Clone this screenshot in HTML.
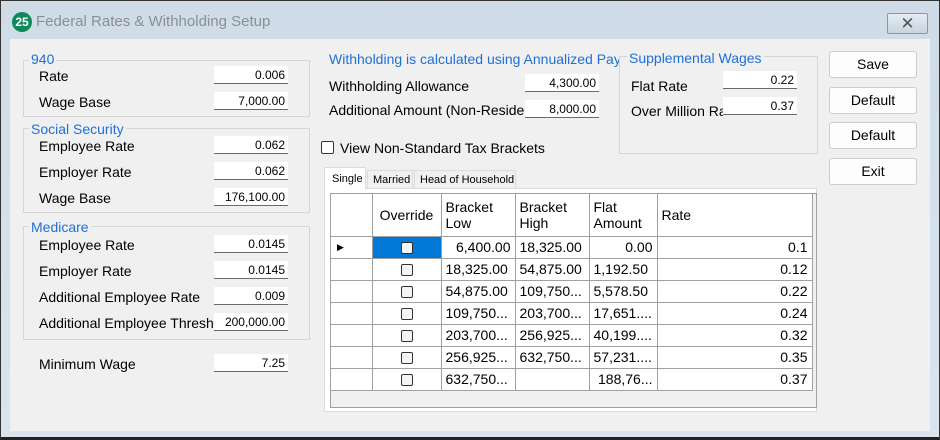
<!DOCTYPE html>
<html><head><style>
*{box-sizing:border-box;margin:0;padding:0}
body{width:940px;height:440px;overflow:hidden;background:#dbe6f1;font-family:"Liberation Sans",sans-serif;position:relative}
.a{position:absolute}
.win{left:0;top:0;width:940px;height:440px;border:1px solid #333;border-bottom:3px solid #222;background:linear-gradient(#cfdbe7,#d9e4ef)}
.body{left:10px;top:39px;width:920px;height:392px;background:#f0f0f0}
.lbl{font-size:14px;color:#000;white-space:nowrap}
.blue{color:#1e6fd9;font-size:14px;white-space:nowrap}
.in{background:#fff;border-bottom:1px solid #6a6a6a;height:18px;font-size:12px;text-align:right;padding:2px 3px 0 0;white-space:nowrap}
.grp{border:1px solid #d6d6d6}
.gt{background:#f0f0f0;padding:0 2px}
.btn{background:#fdfdfd;border:1px solid #ccc;border-radius:3px;width:88px;height:27px;font-size:14px;text-align:center;line-height:25px}
table{border-collapse:collapse;font-size:14px}
td{border:1px solid #a0a0a0;height:22px;padding:0 4px;white-space:nowrap;overflow:hidden}
.cb{display:inline-block;width:12px;height:12px;border:1px solid #333;border-radius:2px;background:#f4f4f4;vertical-align:middle}
</style></head><body>
<div class="a win"></div>
<div class="a" style="left:12px;top:12px;width:20px;height:20px;border-radius:50%;background:#0d8a5a;color:#fff;font-size:12px;font-weight:bold;text-align:center;line-height:20px">25</div>
<div class="a" style="left:36px;top:13px;font-size:15px;color:#8a8f96">Federal Rates &amp; Withholding Setup</div>
<div class="a" style="left:887px;top:13px;width:41px;height:21px;border:1px solid #8898aa;background:linear-gradient(#e4ecf4,#c8d4e0);border-radius:2px;text-align:center;font-size:17px;line-height:19px;color:#555">✕</div>
<div class="a body"></div>

<div class="a grp" style="left:23px;top:60px;width:287px;height:57px"></div>
<div class="a blue gt" style="left:29px;top:51px">940</div>
<div class="a lbl" style="left:39px;top:68px">Rate</div>
<div class="a in" style="left:214px;top:66px;width:74px">0.006</div>
<div class="a lbl" style="left:39px;top:94px">Wage Base</div>
<div class="a in" style="left:214px;top:92px;width:74px">7,000.00</div>

<div class="a grp" style="left:23px;top:128px;width:287px;height:85px"></div>
<div class="a blue gt" style="left:29px;top:121px">Social Security</div>
<div class="a lbl" style="left:39px;top:138px">Employee Rate</div>
<div class="a in" style="left:214px;top:136px;width:74px">0.062</div>
<div class="a lbl" style="left:39px;top:164px">Employer Rate</div>
<div class="a in" style="left:214px;top:162px;width:74px">0.062</div>
<div class="a lbl" style="left:39px;top:190px">Wage Base</div>
<div class="a in" style="left:214px;top:188px;width:74px">176,100.00</div>

<div class="a grp" style="left:23px;top:226px;width:287px;height:114px"></div>
<div class="a blue gt" style="left:29px;top:219px">Medicare</div>
<div class="a lbl" style="left:39px;top:237px">Employee Rate</div>
<div class="a in" style="left:214px;top:235px;width:74px">0.0145</div>
<div class="a lbl" style="left:39px;top:263px">Employer Rate</div>
<div class="a in" style="left:214px;top:261px;width:74px">0.0145</div>
<div class="a lbl" style="left:39px;top:289px">Additional Employee Rate</div>
<div class="a in" style="left:214px;top:287px;width:74px">0.009</div>
<div class="a lbl" style="left:39px;top:315px">Additional Employee Thresh</div>
<div class="a in" style="left:214px;top:313px;width:74px">200,000.00</div>

<div class="a lbl" style="left:39px;top:356px">Minimum Wage</div>
<div class="a in" style="left:214px;top:354px;width:74px">7.25</div>

<div class="a blue" style="left:329px;top:51px;width:290px;overflow:hidden">Withholding is calculated using Annualized Pay</div>
<div class="a lbl" style="left:329px;top:78px">Withholding Allowance</div>
<div class="a in" style="left:525px;top:74px;width:74px">4,300.00</div>
<div class="a lbl" style="left:329px;top:102px;width:196px;overflow:hidden">Additional Amount (Non-Resident)</div>
<div class="a in" style="left:525px;top:100px;width:74px">8,000.00</div>
<div class="a" style="left:321px;top:141px;width:13px;height:13px;border:1px solid #333;border-radius:2px;background:#fff"></div>
<div class="a lbl" style="left:340px;top:140px">View Non-Standard Tax Brackets</div>

<div class="a grp" style="left:619px;top:56px;width:199px;height:98px"></div>
<div class="a blue gt" style="left:627px;top:50px">Supplemental Wages</div>
<div class="a lbl" style="left:631px;top:78px">Flat Rate</div>
<div class="a in" style="left:723px;top:71px;width:74px">0.22</div>
<div class="a lbl" style="left:631px;top:103px;width:92px;overflow:hidden">Over Million Rate</div>
<div class="a in" style="left:723px;top:97px;width:74px">0.37</div>

<div class="a btn" style="left:829px;top:51px">Save</div>
<div class="a btn" style="left:829px;top:87px">Default</div>
<div class="a btn" style="left:829px;top:122px">Default</div>
<div class="a btn" style="left:829px;top:158px">Exit</div>

<div class="a" style="left:324px;top:188px;width:493px;height:224px;background:#fff;border:1px solid #dcdcdc"></div>
<div class="a" style="left:324px;top:167px;width:42px;height:22px;background:#fff;border:1px solid #dcdcdc;border-bottom:none;font-size:11px;padding:5px 0 0 7px">Single</div>
<div class="a" style="left:367px;top:170px;width:46px;height:19px;background:#f0f0f0;border:1px solid #dcdcdc;font-size:11px;padding:3px 0 0 5px">Married</div>
<div class="a" style="left:414px;top:170px;width:102px;height:19px;background:#f0f0f0;border:1px solid #dcdcdc;font-size:11px;padding:3px 0 0 5px">Head of Household</div>

<div class="a" style="left:330px;top:193px;width:487px;height:215px;background:#f0f0f0;border:1px solid #a0a0a0;overflow:hidden">
<table style="background:#fff;table-layout:fixed;width:481px">
<colgroup><col style="width:41px"><col style="width:69px"><col style="width:74px"><col style="width:74px"><col style="width:68px"><col style="width:155px"></colgroup>
<tr style="height:42px"><td style="border-top:none;border-left:none"></td><td style="border-top:none;text-align:center">Override</td><td style="border-top:none">Bracket<br>Low</td><td style="border-top:none">Bracket<br>High</td><td style="border-top:none">Flat<br>Amount</td><td style="border-top:none">Rate</td></tr>
<tr><td style="border-left:none;font-size:9px;padding-left:6px">▶</td><td style="text-align:center;background:#0078d7"><span class="cb"></span></td><td style="text-align:right">6,400.00</td><td>18,325.00</td><td style="text-align:right">0.00</td><td style="text-align:right">0.1</td></tr>
<tr><td style="border-left:none"></td><td style="text-align:center"><span class="cb"></span></td><td>18,325.00</td><td>54,875.00</td><td>1,192.50</td><td style="text-align:right">0.12</td></tr>
<tr><td style="border-left:none"></td><td style="text-align:center"><span class="cb"></span></td><td>54,875.00</td><td>109,750...</td><td>5,578.50</td><td style="text-align:right">0.22</td></tr>
<tr><td style="border-left:none"></td><td style="text-align:center"><span class="cb"></span></td><td>109,750...</td><td>203,700...</td><td>17,651....</td><td style="text-align:right">0.24</td></tr>
<tr><td style="border-left:none"></td><td style="text-align:center"><span class="cb"></span></td><td>203,700...</td><td>256,925...</td><td>40,199....</td><td style="text-align:right">0.32</td></tr>
<tr><td style="border-left:none"></td><td style="text-align:center"><span class="cb"></span></td><td>256,925...</td><td>632,750...</td><td>57,231....</td><td style="text-align:right">0.35</td></tr>
<tr><td style="border-left:none"></td><td style="text-align:center"><span class="cb"></span></td><td>632,750...</td><td></td><td style="text-align:right">188,76...</td><td style="text-align:right">0.37</td></tr>
</table></div>
</body></html>
